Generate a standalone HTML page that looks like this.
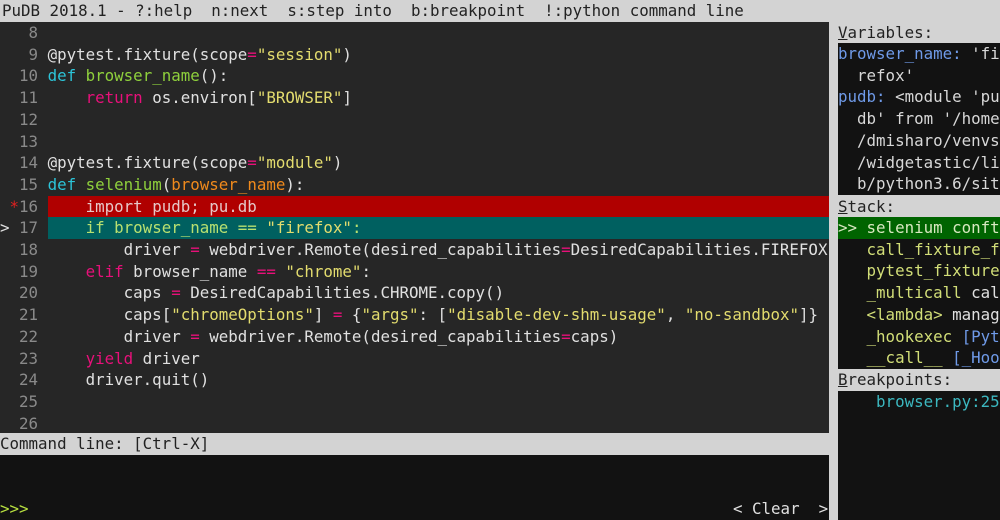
<!DOCTYPE html>
<html><head><meta charset="utf-8"><style>
*{margin:0;padding:0}
body{width:1000px;height:520px;overflow:hidden;background:#d3d3d3;font-family:"DejaVu Sans Mono","Liberation Mono",monospace;font-size:15.8px;color:#d8d8d8}
.r{position:absolute;left:0;height:21.7px;line-height:21.7px;white-space:pre}
.bar{background:#d3d3d3;color:#222}
#code{position:absolute;left:0;top:22px;width:829px;height:412px;background:#262626}
#cmd{position:absolute;left:0;top:455px;width:829px;height:65px;background:#121212}
.box{position:absolute;left:838px;width:162px;background:#121212;overflow:hidden}
.ln{color:#8a8a8a}.kw{color:#2cc4d8}.fn{color:#8fd13c}.st{color:#e3dc6e}.mg{color:#e8107a}.pa{color:#f08a1c}.tx{color:#e0e0e0}
.vn{color:#6f9ae8}.sk{color:#d2de78}.bl{color:#6f9ae8}
u{text-decoration:underline}
</style></head><body>
<div class="r bar" style="top:0;width:1000px;padding-left:2px">PuDB 2018.1 - ?:help  n:next  s:step into  b:breakpoint  !:python command line</div>
<div id="code">
<div class="r" style="top:0"><span class="ln">   8 </span></div>
<div class="r" style="top:21.7px"><span class="ln">   9 </span><span class="tx">@pytest.fixture(scope</span><span class="mg">=</span><span class="st">"session"</span><span class="tx">)</span></div>
<div class="r" style="top:43.4px"><span class="ln">  10 </span><span class="kw">def</span> <span class="fn">browser_name</span><span class="tx">():</span></div>
<div class="r" style="top:65.1px"><span class="ln">  11 </span>    <span class="mg">return</span><span class="tx"> os.environ[</span><span class="st">"BROWSER"</span><span class="tx">]</span></div>
<div class="r" style="top:86.8px"><span class="ln">  12 </span></div>
<div class="r" style="top:108.5px"><span class="ln">  13 </span></div>
<div class="r" style="top:130.2px"><span class="ln">  14 </span><span class="tx">@pytest.fixture(scope</span><span class="mg">=</span><span class="st">"module"</span><span class="tx">)</span></div>
<div class="r" style="top:151.9px"><span class="ln">  15 </span><span class="kw">def</span> <span class="fn">selenium</span><span class="tx">(</span><span class="pa">browser_name</span><span class="tx">):</span></div>
<div class="r" style="top:173.6px;width:829px"><span style="color:#e02020"> *</span><span class="ln">16 </span><span style="background:#b00000;color:#e6c8c8;display:inline-block;width:781px">    import pudb; pu.db</span></div>
<div class="r" style="top:195.3px;width:829px"><span class="tx">&gt; </span><span class="ln">17 </span><span style="background:#006060;display:inline-block;width:781px;color:#b8e070">    if browser_name == <span class="st">"firefox"</span>:</span></div>
<div class="r" style="top:217px"><span class="ln">  18 </span><span class="tx">        driver </span><span class="mg">=</span><span class="tx"> webdriver.Remote(desired_capabilities</span><span class="mg">=</span><span class="tx">DesiredCapabilities.FIREFOX</span></div>
<div class="r" style="top:238.7px"><span class="ln">  19 </span>    <span class="mg">elif</span><span class="tx"> browser_name </span><span class="mg">==</span> <span class="st">"chrome"</span><span class="tx">:</span></div>
<div class="r" style="top:260.4px"><span class="ln">  20 </span><span class="tx">        caps </span><span class="mg">=</span><span class="tx"> DesiredCapabilities.CHROME.copy()</span></div>
<div class="r" style="top:282.1px"><span class="ln">  21 </span><span class="tx">        caps[</span><span class="st">"chromeOptions"</span><span class="tx">] </span><span class="mg">=</span><span class="tx"> {</span><span class="st">"args"</span><span class="tx">: [</span><span class="st">"disable-dev-shm-usage"</span><span class="tx">, </span><span class="st">"no-sandbox"</span><span class="tx">]}</span></div>
<div class="r" style="top:303.8px"><span class="ln">  22 </span><span class="tx">        driver </span><span class="mg">=</span><span class="tx"> webdriver.Remote(desired_capabilities</span><span class="mg">=</span><span class="tx">caps)</span></div>
<div class="r" style="top:325.5px"><span class="ln">  23 </span>    <span class="mg">yield</span><span class="tx"> driver</span></div>
<div class="r" style="top:347.2px"><span class="ln">  24 </span><span class="tx">    driver.quit()</span></div>
<div class="r" style="top:368.9px"><span class="ln">  25 </span></div>
<div class="r" style="top:390.6px"><span class="ln">  26 </span></div>
</div>
<div class="r bar" style="top:433px;width:829px">Command line: [Ctrl-X]</div>
<div id="cmd">
<div class="r" style="top:43px;color:#b8e040">&gt;&gt;&gt;</div>
<div class="r" style="top:43px;left:733px;color:#e0e0e0">&lt; Clear  &gt;</div>
</div>
<div class="r bar" style="top:22px;left:838px"><u>V</u>ariables:</div>
<div class="box" style="top:43px;height:152px">
<div class="r" style="top:0"><span class="vn">browser_name:</span> 'fi</div>
<div class="r" style="top:21.7px">  refox'</div>
<div class="r" style="top:43.4px"><span class="vn">pudb:</span> &lt;module 'pu</div>
<div class="r" style="top:65.1px">  db' from '/home</div>
<div class="r" style="top:86.8px">  /dmisharo/venvs</div>
<div class="r" style="top:108.5px">  /widgetastic/li</div>
<div class="r" style="top:130.2px">  b/python3.6/sit</div>
</div>
<div class="r bar" style="top:196px;left:838px"><u>S</u>tack:</div>
<div class="box" style="top:217px;height:152px">
<div class="r" style="top:0;width:162px;background:#006400;color:#d8e8c0">&gt;&gt; selenium conft</div>
<div class="r sk" style="top:21.7px">   call_fixture_f</div>
<div class="r sk" style="top:43.4px">   pytest_fixture</div>
<div class="r sk" style="top:65.1px">   _multicall <span class="tx">cal</span></div>
<div class="r sk" style="top:86.8px">   &lt;lambda&gt; <span class="tx">manag</span></div>
<div class="r sk" style="top:108.5px">   _hookexec <span class="bl">[Pyt</span></div>
<div class="r sk" style="top:130.2px">   __call__ <span class="bl">[_Hoo</span></div>
</div>
<div class="r bar" style="top:369px;left:838px"><u>B</u>reakpoints:</div>
<div class="box" style="top:391px;height:129px">
<div class="r" style="top:0;color:#3cb8c0">    browser.py:25</div>
</div>
</body></html>
